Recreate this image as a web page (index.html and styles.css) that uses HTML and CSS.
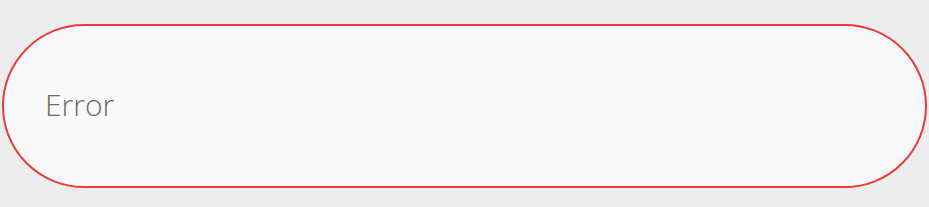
FILE: index.html
```html
<!doctype html>
<html>
	<head>
		<title>Error field</title>
		<meta charset="utf8">
		<link rel="stylesheet" href="styles.css">
	</head>
	<body>
		<div class="field error">
			<span class="label">Error</span>
		</div>
	</body>
</html>
```

FILE: styles.css
```css
html,body {
	background-color: #ededed;
	font-family: "Open Sans", sans-serif;
}
* {
	margin: 0;
	padding: 0;
	box-sizing: border-box;
}
body {
	padding: 24px 2px 0 2px;
}
.field {
	width: 925px;
	height: 164px;
	background-color: #f9f9f9;
	border: 2px solid #e8e8e8;
	border-radius: 82px;
	display: flex;
	align-items: center;
	padding: 0 0 3px 41px;
}
.field.error {
	border-color: #e83c3e;
}
.label {
	font-size: 30px;
	font-weight: 300;
	color: #6c6c6c;
}
```
